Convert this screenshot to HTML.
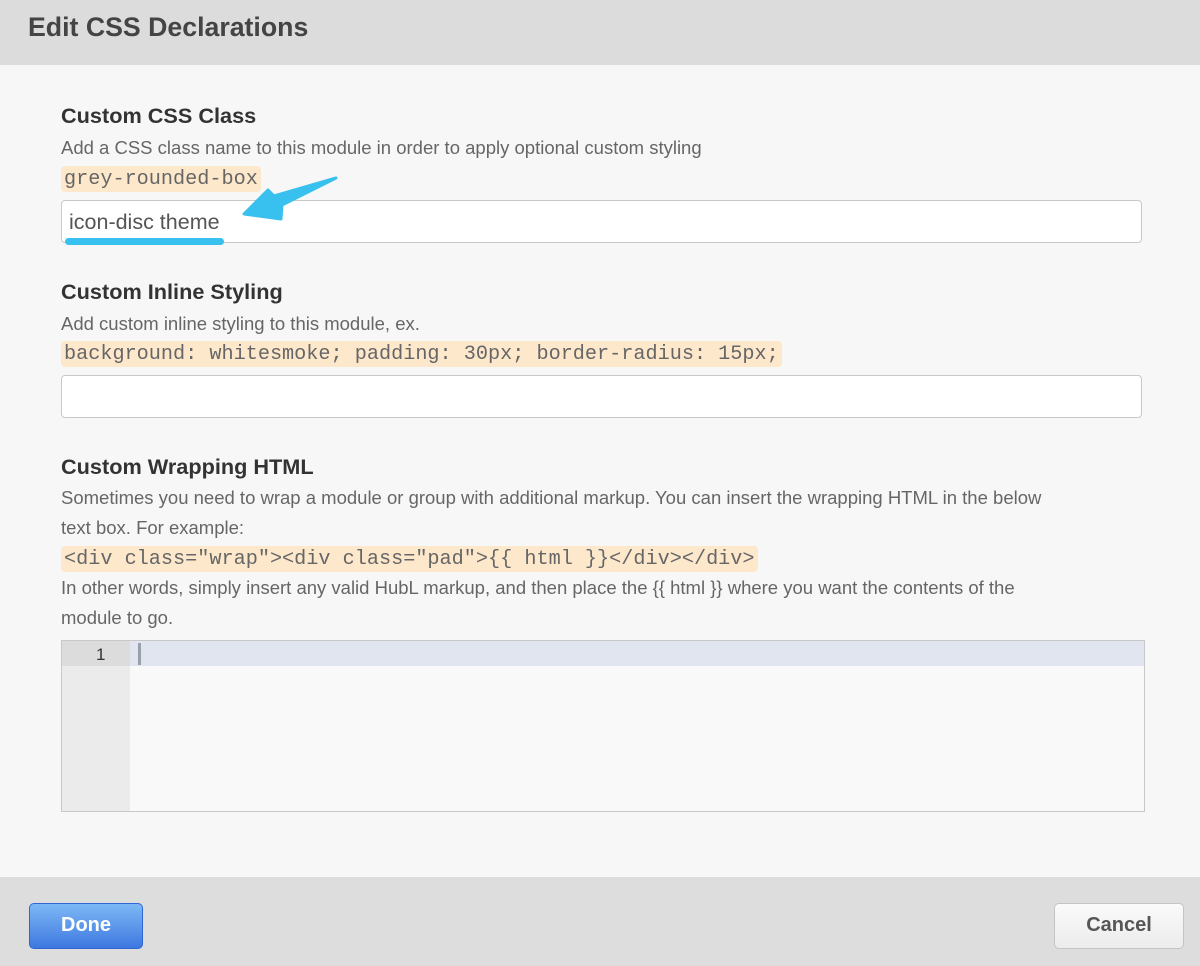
<!DOCTYPE html>
<html><head><meta charset="utf-8"><style>
*{box-sizing:border-box;margin:0;padding:0}
body{width:1200px;height:966px;background:#f7f7f7;font-family:"Liberation Sans",sans-serif;position:relative;overflow:hidden}
.hdr{position:absolute;left:0;top:0;width:1200px;height:65px;background:#dcdcdc}
.hdr h1{position:absolute;left:28px;top:12px;font-size:26.7px;font-weight:bold;color:#444}
.ftr{position:absolute;left:0;top:877px;width:1200px;height:89px;background:#dddddd}
.t{position:absolute;left:61px;font-size:21.7px;font-weight:bold;color:#333}
.d{position:absolute;left:61px;font-size:18.5px;color:#666;white-space:nowrap}
.c{position:absolute;left:61px;height:26px;background:#fde8cc;border-radius:4px;font-family:"Liberation Mono",monospace;font-size:20.2px;color:#666;padding:3px 3px 0 3px;white-space:pre;line-height:22px}
.in{position:absolute;left:61px;width:1081px;height:43px;background:#fff;border:1px solid #c8c8c8;border-radius:4px}
.btn{position:absolute;border-radius:5px;font-size:20px;font-weight:bold;text-align:center}
</style></head><body>
<div class="hdr"><h1>Edit CSS Declarations</h1></div>

<div class="t" style="top:103px">Custom CSS Class</div>
<div class="d" style="top:137px">Add a CSS class name to this module in order to apply optional custom styling</div>
<div class="c" style="top:166px">grey-rounded-box</div>
<div class="in" style="top:200px"><span style="position:absolute;left:7px;top:9px;font-size:21.5px;color:#555">icon-disc theme</span></div>
<div style="position:absolute;left:65px;top:238px;width:159px;height:7px;background:#38c0ef;border-radius:4px"></div>
<svg style="position:absolute;left:0;top:0" width="400" height="260"><path d="M244 214 L268 190 L274 196 L336 178 L282 205 L281 219 Z" fill="#38c0ef" stroke="#38c0ef" stroke-width="3" stroke-linejoin="round"/></svg>

<div class="t" style="top:279px">Custom Inline Styling</div>
<div class="d" style="top:313px">Add custom inline styling to this module, ex.</div>
<div class="c" style="top:341px">background: whitesmoke; padding: 30px; border-radius: 15px;</div>
<div class="in" style="top:375px"></div>

<div class="t" style="top:454px">Custom Wrapping HTML</div>
<div class="d" style="top:487px">Sometimes you need to wrap a module or group with additional markup. You can insert the wrapping HTML in the below</div>
<div class="d" style="top:517px">text box. For example:</div>
<div class="c" style="top:546px">&lt;div class="wrap"&gt;&lt;div class="pad"&gt;{{ html }}&lt;/div&gt;&lt;/div&gt;</div>
<div class="d" style="top:577px">In other words, simply insert any valid HubL markup, and then place the {{ html }} where you want the contents of the</div>
<div class="d" style="top:607px">module to go.</div>

<div style="position:absolute;left:61px;top:640px;width:1084px;height:172px;border:1px solid #c8c8c8;background:#f9f9f9">
<div style="position:absolute;left:0;top:0;width:68px;height:170px;background:#ebebeb"></div>
<div style="position:absolute;left:0;top:0;width:68px;height:25px;background:#dcdcdc"></div>
<div style="position:absolute;left:68px;top:0;width:1014px;height:25px;background:#e1e5ef"></div>
<div style="position:absolute;left:76px;top:2px;width:3px;height:22px;background:#9aa0aa"></div>
<div style="position:absolute;left:34px;top:4px;font-size:17px;color:#333">1</div>
</div>

<div class="ftr"></div>
<div class="btn" style="left:29px;top:903px;width:114px;height:46px;background:linear-gradient(#7db8f5,#3e78e0);border:1px solid #2f66d6;color:#fff;line-height:43px">Done</div>
<div class="btn" style="left:1054px;top:903px;width:130px;height:46px;background:linear-gradient(#fafafa,#ececec);border:1px solid #c4c4c4;color:#555;line-height:43px">Cancel</div>
</body></html>
